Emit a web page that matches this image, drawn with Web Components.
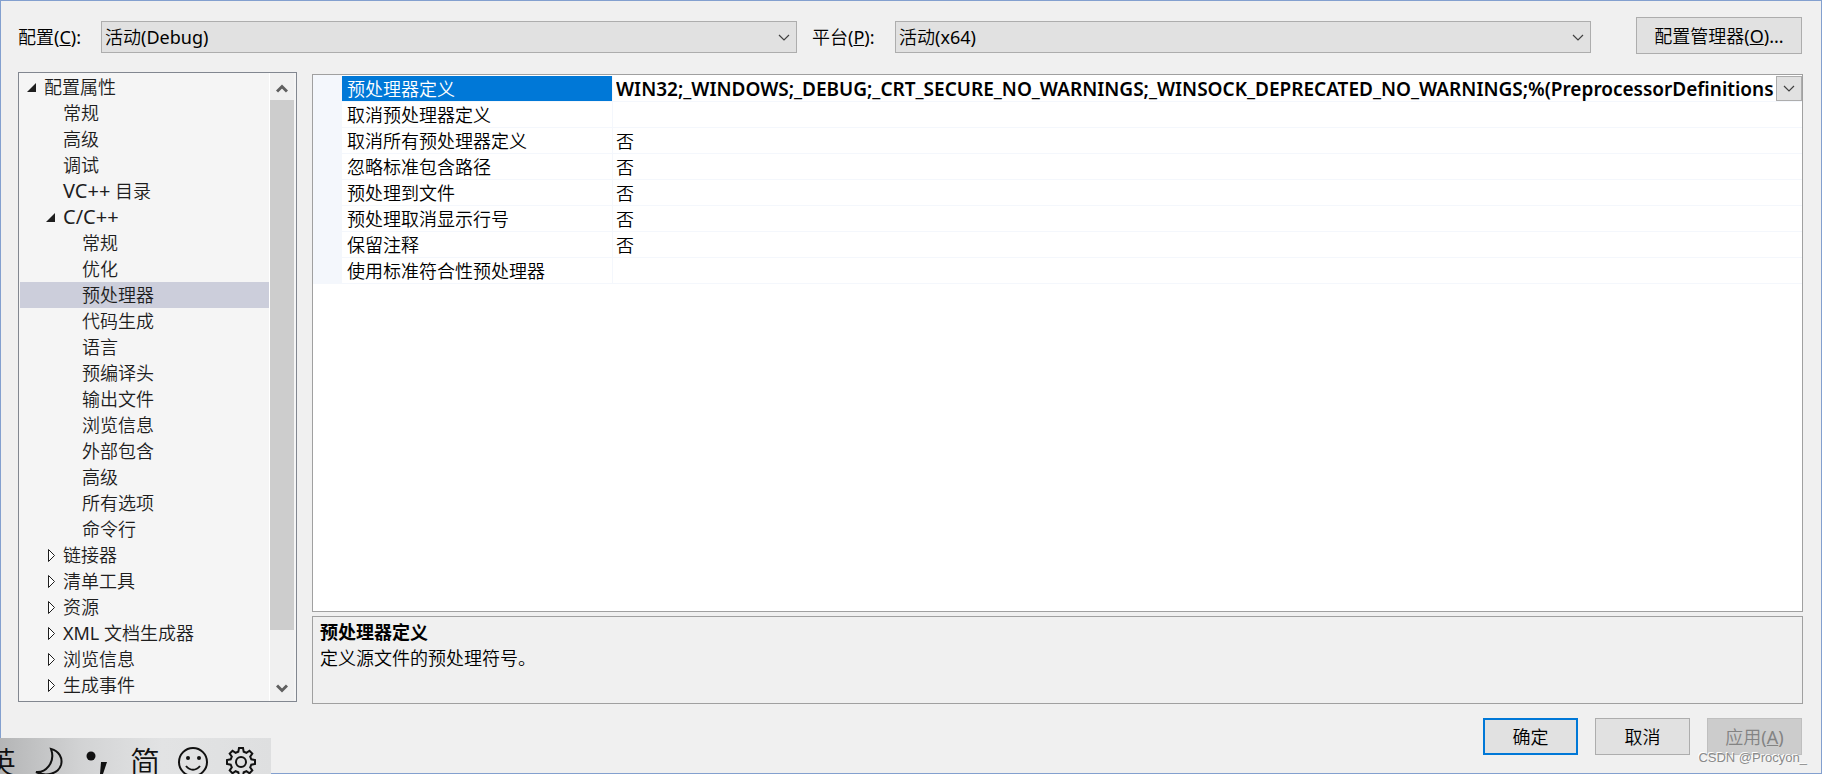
<!DOCTYPE html>
<html lang="zh-CN">
<head>
<meta charset="utf-8">
<title>属性页</title>
<style>
  html, body { margin: 0; }
  body {
    font: 400 18px/26px "Noto Sans", "Noto Sans CJK SC DemiLight", "Noto Sans CJK SC", sans-serif;
    color: #000;
    background: #f0f0f0;
  }
</style>
</head>
<body>
<property-dialog></property-dialog>

<script>
const CHEVRON = '<svg viewBox="0 0 12 7" width="12" height="7" aria-hidden="true"><path d="M1 1l5 5 5-5" fill="none" stroke="currentColor" stroke-width="1.2"/></svg>';
const SCROLL_ARROW = '<svg viewBox="0 0 12 10" width="12" height="10" aria-hidden="true"><path d="M1 1.500l5 5 5-5" fill="none" stroke="currentColor" stroke-width="3"/></svg>';

class LabeledSelect extends HTMLElement {
  constructor() {
    super();
    this.attachShadow({ mode: 'open' });
  }

  connectedCallback() {
    this.shadowRoot.innerHTML = `
      <style>
        :host { display: flex; flex: 1; align-items: center; min-width: 0; padding-bottom: 1px; }
        label { flex: none; width: 83px; white-space: nowrap; }
        .box { display: grid; flex: 1; align-items: center; min-width: 0; }
        .box > * { grid-area: 1 / 1; }
        select {
          appearance: none;
          width: 100%;
          height: 32px;
          padding: 0 32px 0 3px;
          border: 1px solid #adadad;
          border-radius: 0;
          background: #e1e1e1;
          color: #000;
          font: inherit;
          line-height: 30px;
        }
        svg { justify-self: end; margin-right: 7px; color: #404040; pointer-events: none; }
      </style>
      <label for="list"><slot></slot></label>
      <div class="box">
        <select id="list"><option>${this.getAttribute('value')}</option></select>
        ${CHEVRON}
      </div>
    `;
  }
}

class DialogButton extends HTMLElement {
  constructor() {
    super();
    this.attachShadow({ mode: 'open' });
  }

  connectedCallback() {
    this.shadowRoot.innerHTML = `
      <style>
        :host { display: block; min-width: 95px; }
        :host([wide]) { min-width: 166px; }
        button {
          display: block;
          width: 100%;
          height: 37px;
          padding: 0;
          border: 1px solid #adadad;
          background: #e1e1e1;
          color: #000;
          font: inherit;
        }
        :host([primary]) button { border: 2px solid #0078d7; }
        button:disabled { border-color: #bfbfbf; background: #ccc; color: #838383; }
      </style>
      <button type="button" ${this.hasAttribute('disabled') ? 'disabled' : ''}><slot></slot></button>
    `;
  }
}

class TreeNode extends HTMLElement {
  constructor() {
    super();
    this.attachShadow({ mode: 'open' });
  }

  connectedCallback() {
    const state = this.getAttribute('state');
    let arrow = '';
    if (state === 'open') arrow = '<path d="M11 3v9H2z" fill="#1e1e1e"/>';
    if (state === 'closed') arrow = '<path d="M4.500 1.500v12l6-6z" fill="#fff" stroke="#1e1e1e"/>';

    this.setAttribute('role', 'treeitem');
    this.shadowRoot.innerHTML = `
      <style>
        :host {
          display: flex;
          align-items: center;
          height: 26px;
          padding-left: calc(5px + 19px * var(--level));
          color: #1e1e1e;
          white-space: nowrap;
        }
        :host([selected]) { background: #cccedb; }
        svg { flex: none; margin-right: 4px; }
      </style>
      <svg viewBox="0 0 15 15" width="15" height="15" aria-hidden="true">${arrow}</svg>
      <span><slot></slot></span>
    `;
    this.style.setProperty('--level', this.getAttribute('level') || 0);
  }
}

class TreePanel extends HTMLElement {
  constructor() {
    super();
    this.attachShadow({ mode: 'open' });
  }

  connectedCallback() {
    this.shadowRoot.innerHTML = `
      <style>
        :host {
          display: flex;
          box-sizing: border-box;
          padding-right: 2px;
          border: 1px solid #828790;
          background: #f5f5f5;
        }
        .nodes { flex: 1; padding: 1px 0 3px 1px; overflow: hidden; }
        .scroll {
          display: flex;
          flex-direction: column;
          width: 24px;
          border-left: 1px solid #fff;
          background: #f0f0f0;
        }
        button {
          display: grid;
          place-items: center;
          height: 27px;
          padding: 3px 0 0;
          border: 0;
          background: none;
          color: #606060;
        }
        .up svg { transform: rotate(180deg); }
        .track { display: grid; flex: 1; grid-template-rows: 530fr 44fr; }
        .thumb { background: #cdcdcd; }
      </style>
      <div class="nodes" role="tree"><slot></slot></div>
      <div class="scroll">
        <button class="up" type="button" aria-label="向上滚动">${SCROLL_ARROW}</button>
        <div class="track"><div class="thumb"></div></div>
        <button type="button" aria-label="向下滚动">${SCROLL_ARROW}</button>
      </div>
    `;
  }
}

class PropertyGrid extends HTMLElement {
  constructor() {
    super();
    this.attachShadow({ mode: 'open' });
    this.rows = [
      ['预处理器定义', 'WIN32;_WINDOWS;_DEBUG;_CRT_SECURE_NO_WARNINGS;_WINSOCK_DEPRECATED_NO_WARNINGS;%(PreprocessorDefinitions'],
      ['取消预处理器定义', ''],
      ['取消所有预处理器定义', '否'],
      ['忽略标准包含路径', '否'],
      ['预处理到文件', '否'],
      ['预处理取消显示行号', '否'],
      ['保留注释', '否'],
      ['使用标准符合性预处理器', ''],
    ];
  }

  renderRow([name, value], index) {
    if (index > 0) {
      return `<tr><td class="gutter"></td><th scope="row">${name}</th><td>${value}</td></tr>`;
    }
    return `
      <tr class="active">
        <td class="gutter"></td>
        <th scope="row"><label for="value">${name}</label></th>
        <td>
          <div class="editor">
            <input id="value" type="text" value="${value}">
            <button type="button" aria-label="展开">${CHEVRON}</button>
          </div>
        </td>
      </tr>
    `;
  }

  connectedCallback() {
    this.shadowRoot.innerHTML = `
      <style>
        :host { display: block; border: 1px solid #a0a0a0; background: #fff; }
        table { width: 100%; border-spacing: 0; table-layout: fixed; }
        col.gutter { width: 29px; }
        col.name { width: 271px; }
        th, td {
          box-sizing: border-box;
          height: 26px;
          padding: 1px 0 0 3px;
          border-bottom: 1px solid #f4f7fc;
          line-height: 24px;
          font-weight: inherit;
          text-align: left;
          white-space: nowrap;
        }
        th { padding-left: 5px; border-right: 1px solid #f4f7fc; }
        .gutter { background: #f4f7fc; }
        .active th { background: #0078d7; background-clip: padding-box; color: #fff; }
        .active td { padding-top: 0; }
        .editor { display: flex; height: 25px; }
        input {
          flex: 1;
          min-width: 0;
          padding: 1px 0 0;
          border: 0;
          background: none;
          color: #000;
          font: inherit;
          font-size: 19px;
          font-weight: 600;
        }
        button {
          display: grid;
          place-items: center;
          width: 26px;
          padding: 0;
          border: 1px solid #adadad;
          background: #e1e1e1;
          color: #404040;
        }
        .top { height: 1px; background: #f4f7fc; width: 29px; }
      </style>
      <div class="top"></div>
      <table>
        <colgroup><col class="gutter"><col class="name"><col></colgroup>
        <tbody>${this.rows.map((row, i) => this.renderRow(row, i)).join('')}</tbody>
      </table>
    `;
  }
}

class HelpPane extends HTMLElement {
  constructor() {
    super();
    this.attachShadow({ mode: 'open' });
  }

  connectedCallback() {
    this.shadowRoot.innerHTML = `
      <style>
        :host {
          display: block;
          box-sizing: border-box;
          min-height: 88px;
          padding: 2px 7px;
          border: 1px solid #a0a0a0;
        }
        h2, p { margin: 0; font-size: 18px; line-height: 26px; }
        h2 { font-family: "Noto Sans", "Noto Sans CJK SC", sans-serif; }
      </style>
      <h2><slot name="title"></slot></h2>
      <p><slot></slot></p>
    `;
  }
}

class ImeBar extends HTMLElement {
  constructor() {
    super();
    this.attachShadow({ mode: 'open' });
  }

  connectedCallback() {
    // the bar hangs over the window's corner, so its first and last pixels are cut
    this.shadowRoot.innerHTML = `
      <style>
        :host {
          display: block;
          height: 36px;
          overflow: hidden;
          background: linear-gradient(90deg, #b4b5b6, #d2d3d4 30%, #e2e3e4 60%, #dedfe0);
          color: #111;
        }
        .items {
          display: grid;
          grid-template-columns: repeat(6, 48px);
          justify-items: center;
          align-items: center;
          width: 288px;
          height: 48px;
          margin-left: -23px;
          font-size: 30px;
          line-height: 48px;
        }
        svg { fill: none; stroke: currentColor; stroke-width: 2; }
      </style>
      <div class="items">
        <span>英</span>
        <svg viewBox="0 0 30 30" width="30" height="30"><path d="M17 2c8 2 12 9 10 16-3 9-15 12-25 7 9 1 20-9 15-23z"/></svg>
        <svg viewBox="0 0 30 30" width="30" height="30"><g fill="currentColor" stroke="none"><circle cx="9" cy="9" r="4.500"/><path d="M19 15h6l-4 12h-3z"/></g></svg>
        <span>简</span>
        <svg viewBox="0 0 32 32" width="32" height="32"><circle cx="16" cy="16" r="14"/><path d="M9 20c4 5 10 5 14 0"/><g fill="currentColor" stroke="none"><circle cx="11" cy="12" r="2"/><circle cx="22" cy="12" r="2"/></g></svg>
        <svg viewBox="0 0 32 32" width="32" height="32"><circle cx="16" cy="16" r="5"/><path d="M13.300 5.700L14 2h4l.700 3.700 2.700 1.100L24.500 4.700l2.800 2.800-2.100 3.100 1.100 2.700L30 14v4l-3.700.700-1.100 2.700 2.100 3.100-2.800 2.800-3.100-2.100-2.700 1.100L18 30h-4l-.700-3.700-2.700-1.100-3.100 2.100-2.800-2.800 2.100-3.100-1.100-2.700L2 18v-4l3.700-.700 1.100-2.700-2.100-3.100 2.800-2.800 3.100 2.100z"/></svg>
      </div>
    `;
  }
}

class PropertyDialog extends HTMLElement {
  constructor() {
    super();
    this.attachShadow({ mode: 'open' });
  }

  connectedCallback() {
    this.shadowRoot.innerHTML = `
      <style>
        :host {
          display: flex;
          flex-direction: column;
          position: relative;
          box-sizing: border-box;
          min-height: 100vh;
          padding: 16px 18px 18px 17px;
          border: 1px solid #83a0cf;
        }
        header, footer { padding-right: 1px; }
        header { display: flex; align-items: flex-end; gap: 15px; }
        header dialog-button { margin-left: 30px; }
        main {
          display: grid;
          flex: 1;
          grid-template-columns: 279px minmax(0, 1fr);
          column-gap: 15px;
          margin-top: 18px;
        }
        tree-panel { margin-bottom: 2px; }
        .large { font-size: 20px; }
        .right { display: flex; flex-direction: column; gap: 4px; padding-top: 2px; }
        property-grid { flex: 1; }
        footer { display: flex; justify-content: flex-end; gap: 17px; margin-top: 14px; }
        ime-bar { position: absolute; left: -1px; bottom: -1px; width: 271px; }
        .mark {
          position: absolute;
          right: 14px;
          bottom: 5px;
          color: #8a8a8a;
          font: 13px/20px "Liberation Sans", sans-serif;
          text-shadow: -1px -1px #fff;
        }
      </style>
      <header>
        <labeled-select value="活动(Debug)">配置(<u>C</u>):</labeled-select>
        <labeled-select value="活动(x64)">平台(<u>P</u>):</labeled-select>
        <dialog-button wide>配置管理器(<u>O</u>)...</dialog-button>
      </header>
      <main>
        <tree-panel>
          <tree-node level="0" state="open">配置属性</tree-node>
          <tree-node level="1">常规</tree-node>
          <tree-node level="1">高级</tree-node>
          <tree-node level="1">调试</tree-node>
          <tree-node level="1"><span class="large">VC++</span> 目录</tree-node>
          <tree-node level="1" state="open"><span class="large">C/C++</span></tree-node>
          <tree-node level="2">常规</tree-node>
          <tree-node level="2">优化</tree-node>
          <tree-node level="2" selected>预处理器</tree-node>
          <tree-node level="2">代码生成</tree-node>
          <tree-node level="2">语言</tree-node>
          <tree-node level="2">预编译头</tree-node>
          <tree-node level="2">输出文件</tree-node>
          <tree-node level="2">浏览信息</tree-node>
          <tree-node level="2">外部包含</tree-node>
          <tree-node level="2">高级</tree-node>
          <tree-node level="2">所有选项</tree-node>
          <tree-node level="2">命令行</tree-node>
          <tree-node level="1" state="closed">链接器</tree-node>
          <tree-node level="1" state="closed">清单工具</tree-node>
          <tree-node level="1" state="closed">资源</tree-node>
          <tree-node level="1" state="closed">XML 文档生成器</tree-node>
          <tree-node level="1" state="closed">浏览信息</tree-node>
          <tree-node level="1" state="closed">生成事件</tree-node>
        </tree-panel>
        <div class="right">
          <property-grid></property-grid>
          <help-pane><span slot="title">预处理器定义</span>定义源文件的预处理符号。</help-pane>
        </div>
      </main>
      <footer>
        <dialog-button primary>确定</dialog-button>
        <dialog-button>取消</dialog-button>
        <dialog-button disabled>应用(<u>A</u>)</dialog-button>
      </footer>
      <ime-bar></ime-bar>
      <span class="mark">CSDN @Procyon_</span>
    `;
  }
}

customElements.define('labeled-select', LabeledSelect);
customElements.define('dialog-button', DialogButton);
customElements.define('tree-node', TreeNode);
customElements.define('tree-panel', TreePanel);
customElements.define('property-grid', PropertyGrid);
customElements.define('help-pane', HelpPane);
customElements.define('ime-bar', ImeBar);
customElements.define('property-dialog', PropertyDialog);
</script>
</body>
</html>
